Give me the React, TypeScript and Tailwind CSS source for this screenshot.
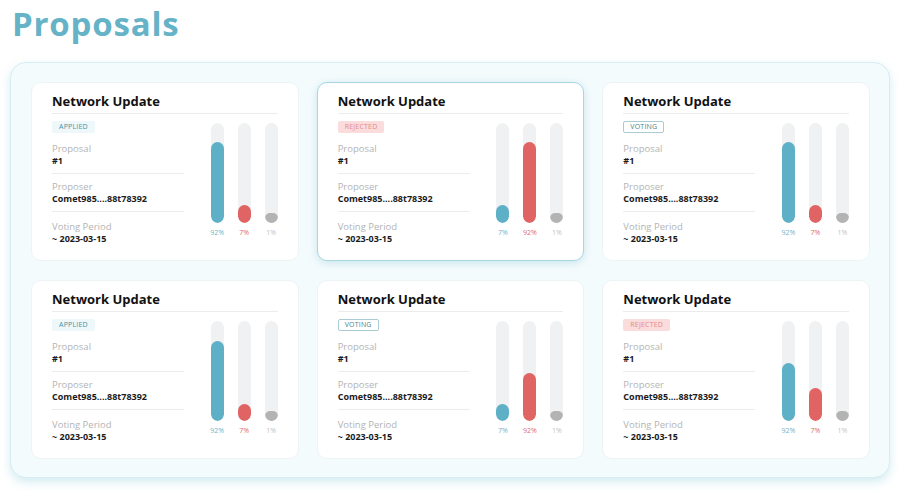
type Status = "applied" | "rejected" | "voting";

interface Proposal {
  id: number;
  status: Status;
  // fill heights in px out of a 100px track
  fills: [number, number, number];
  labels: [string, string, string];
  highlighted?: boolean;
}

const proposals: Proposal[] = [
  { id: 1, status: "applied", fills: [81, 18, 10], labels: ["92%", "7%", "1%"] },
  { id: 2, status: "rejected", fills: [18, 81, 10], labels: ["7%", "92%", "1%"], highlighted: true },
  { id: 3, status: "voting", fills: [81, 18, 10], labels: ["92%", "7%", "1%"] },
  { id: 4, status: "applied", fills: [80, 17, 10], labels: ["92%", "7%", "1%"] },
  { id: 5, status: "voting", fills: [17, 48, 10], labels: ["7%", "92%", "1%"] },
  { id: 6, status: "rejected", fills: [58, 33, 10], labels: ["92%", "7%", "1%"] },
];

const badgeStyles: Record<Status, string> = {
  applied: "bg-[#eef8fa] text-[#4b8f9e] border-transparent",
  rejected: "bg-[#fbdcdc] text-[#e48a8a] border-transparent",
  voting: "bg-white text-[#4d7f8b] border-[#a9ccd5]",
};

const barColors = ["bg-[#5eb0c7]", "bg-[#e06464]", "bg-[#b3b3b3]"];
const labelColors = ["text-[#6cb4c9]", "text-[#e06a6a]", "text-[#c2c2c2]"];

function Field({ label, value, last }: { label: string; value: string; last?: boolean }) {
  return (
    <div className={`flex flex-col ${last ? "pt-[9px]" : "border-b border-[#ececec] pb-[6px] pt-[7px]"}`}>
      <span className="text-[9.5px] leading-[12px] text-[#b4b4b4]">{label}</span>
      <span className="text-[9px] font-bold leading-[12px] text-[#1b1b1b]">{value}</span>
    </div>
  );
}

function Bars({ fills, labels }: { fills: number[]; labels: string[] }) {
  return (
    <div className="flex gap-[14px] pt-[9px]">
      {fills.map((h, i) => (
        <div key={i} className="flex w-[13px] flex-col items-center">
          <div className="flex h-[100px] w-[13px] flex-col justify-end overflow-hidden rounded-full bg-[#eff1f2]">
            <div className={`w-full rounded-full ${barColors[i]}`} style={{ height: h }} />
          </div>
          <span className={`mt-[5px] text-[7px] leading-[10px] ${labelColors[i]}`}>{labels[i]}</span>
        </div>
      ))}
    </div>
  );
}

function ProposalCard({ p }: { p: Proposal }) {
  return (
    <div
      className={`h-[179px] rounded-[10px] bg-white px-[20px] pt-[9px] ${
        p.highlighted
          ? "border border-[#a9d6e0] shadow-[0_2px_8px_rgba(120,190,210,0.35)]"
          : "border border-[#eef4f6]"
      }`}
    >
      <h3 className="border-b border-[#ececec] pb-[3px] text-[13px] font-bold leading-[18px] text-[#111]">
        Network Update
      </h3>
      <div className="flex justify-between">
        <div className="w-[132px] pt-[7px]">
          <div className="flex">
            <span
              className={`rounded-[2px] border px-[6px] text-[7px] uppercase leading-[10px] tracking-[0.2px] ${badgeStyles[p.status]}`}
            >
              {p.status}
            </span>
          </div>
          <div className="mt-[3px]">
            <Field label="Proposal" value="#1" />
            <Field label="Proposer" value="Comet985....88t78392" />
            <Field label="Voting Period" value="~ 2023-03-15" last />
          </div>
        </div>
        <Bars fills={p.fills} labels={p.labels} />
      </div>
    </div>
  );
}

export default function App() {
  return (
    <div className="h-[495px] w-[900px] overflow-hidden bg-white px-[10px] pt-[2px] font-['Open_Sans','Noto_Sans',sans-serif]">
      <h1 className="pl-[2px] text-[33px] font-bold leading-[44px] tracking-[0.8px] text-[#66b3c8]">Proposals</h1>
      <section className="mt-[16px] rounded-[16px] border border-[#d6eef3] bg-[#f4fbfd] pb-[18px] pl-[20px] pr-[19px] pt-[19px] shadow-[0_4px_10px_rgba(130,200,215,0.35)]">
        <div className="grid grid-cols-3 gap-x-[18px] gap-y-[19px]">
          {proposals.map((p) => (
            <ProposalCard key={p.id} p={p} />
          ))}
        </div>
      </section>
    </div>
  );
}
